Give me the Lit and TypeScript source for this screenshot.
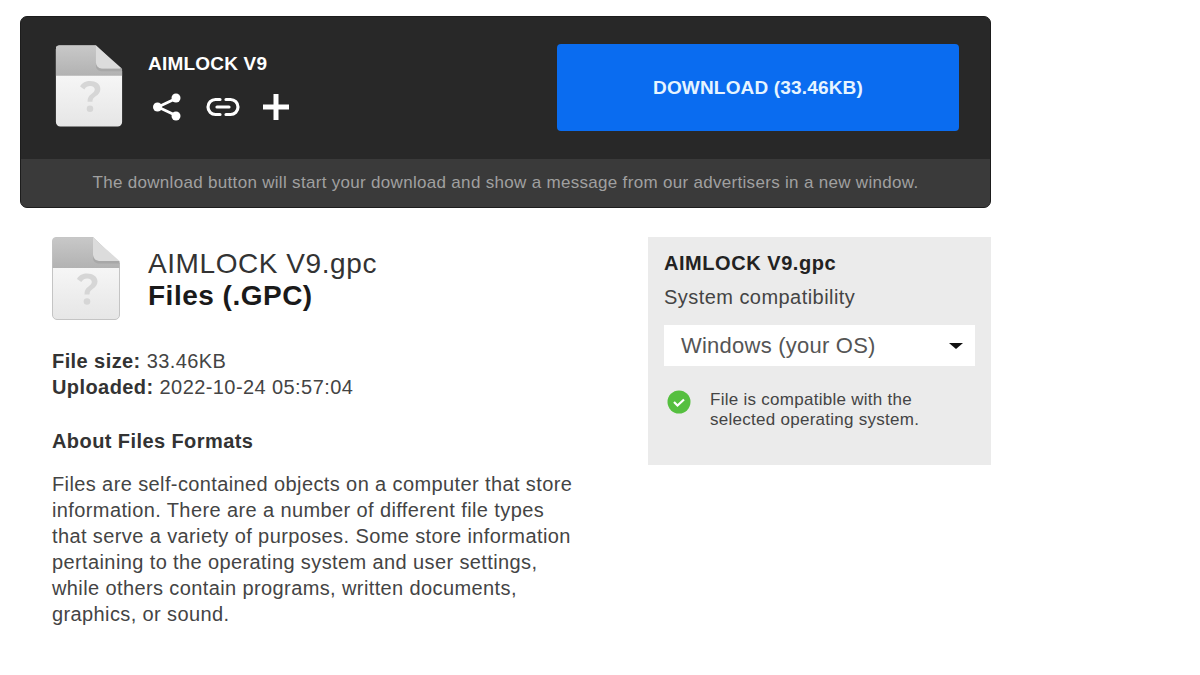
import { LitElement, html, css, svg } from "lit";
import { customElement } from "lit/decorators.js";

const fileIcon = (dark: boolean) => svg`
<svg class="fi" viewBox="0 0 68 83" width="68" height="83" aria-hidden="true">
  <defs>
    <linearGradient id="top" x1="0" y1="0" x2="0" y2="1"><stop offset="0" stop-color="#c8c8c8"/><stop offset="1" stop-color="#b2b2b2"/></linearGradient>
    <linearGradient id="bot" x1="0" y1="0" x2="0" y2="1"><stop offset="0" stop-color="#ffffff"/><stop offset="1" stop-color="#e6e6e6"/></linearGradient>
  </defs>
  <path d="M4 .5H41L67.5 26V78a4.500 4.500 0 0 1-4.500 4.500H5A4.500 4.500 0 0 1 .5 78V4A3.500 3.500 0 0 1 4 .5Z" fill="url(#bot)" stroke="${dark ? "none" : "#c4c4c4"}"/>
  <path d="M4 .5H41L67.5 26V31H.5V4A3.500 3.500 0 0 1 4 .5Z" fill="url(#top)"/>
  <path d="M41 .5L67.5 24H47a6 6 0 0 1-6-6Z" fill="#dcdcdc"/>
  <path d="M41 18a6 6 0 0 0 6 6H67.5V26.500H46a6 6 0 0 1-5-6Z" fill="#a8a8a8"/>
  <path d="M25 42c2-4 6-5.500 10-5.500 6 0 10.500 3 10.500 8 0 3.500-2 5.500-4.800 7.500-2.200 1.600-3.200 2.700-3.200 5.500h-5c0-4 1.200-6 4-8 2.300-1.700 3.300-2.800 3.300-4.700 0-2-1.800-3.300-4.500-3.300-2.500 0-4.500 1-6 3.500Z" fill="#d6d6d6"/>
  <circle cx="35" cy="64.500" r="3.300" fill="#d6d6d6"/>
</svg>`;

@customElement("app-root")
export class AppRoot extends LitElement {
  static styles = css`
    :host {
      display: block;
      width: 1200px;
      height: 675px;
      box-sizing: border-box;
      padding: 16px 209px 0 20px;
      background: #fff;
      font-family: "Liberation Sans", Arial, sans-serif;
      color: #333;
      overflow: hidden;
    }
    .card {
      height: 192px;
      background: #282828;
      border: 1px solid #1d1d1d;
      border-radius: 7px;
      box-sizing: border-box;
      display: flex;
      flex-direction: column;
      overflow: hidden;
    }
    .card-main {
      flex: 0 0 142px;
      display: flex;
      align-items: flex-start;
      padding: 27px 31px 0 34px;
      box-sizing: border-box;
    }
    .card-main .fi { flex: none; height: 82px; margin-top: 1px; }
    .card-info {
      margin-left: 25px;
      flex: 1;
      display: flex;
      flex-direction: column;
      padding-top: 10px;
    }
    .card-title {
      color: #fff;
      font-size: 19px;
      font-weight: 700;
      line-height: 20px;
      letter-spacing: 0.2px;
    }
    .actions {
      display: flex;
      align-items: center;
      gap: 23px;
      margin-top: 18px;
      margin-left: 4px;
    }
    .actions svg { display: block; flex: none; }
    .dl {
      width: 402px;
      height: 87px;
      background: #0a6cf0;
      border-radius: 4px;
      display: flex;
      align-items: center;
      justify-content: center;
      color: #e6f4ff;
      font-size: 19px;
      font-weight: 700;
      letter-spacing: 0.17px;
      flex: none;
    }
    .card-note {
      flex: 1;
      background: #3a3a3a;
      color: #a0a0a0;
      font-size: 17px;
      display: flex;
      align-items: center;
      justify-content: center;
      letter-spacing: 0.31px;
      white-space: nowrap;
    }
    .body {
      display: flex;
      justify-content: space-between;
      margin-top: 29px;
      padding-left: 32px;
    }
    .left { width: 560px; }
    .head { display: flex; gap: 28px; }
    .head h1 {
      margin: 11px 0 0;
      font-size: 28px;
      font-weight: 400;
      line-height: 31px;
      letter-spacing: 0.57px;
      color: #333;
    }
    .head h2 {
      margin: 1px 0 0;
      font-size: 28px;
      font-weight: 700;
      line-height: 31px;
      letter-spacing: 0.5px;
      color: #1a1a1a;
    }
    .meta {
      margin-top: 28px;
      font-size: 20px;
      line-height: 26px;
      letter-spacing: 0.42px;
      color: #444;
    }
    .meta b { color: #333; }
    h3 {
      margin: 29px 0 0;
      font-size: 20px;
      line-height: 24px;
      font-weight: 700;
      letter-spacing: 0.42px;
      color: #333;
    }
    .about {
      margin: 18px 0 0;
      font-size: 20px;
      line-height: 26px;
      letter-spacing: 0.39px;
      color: #444;
      white-space: nowrap;
    }
    .panel {
      width: 343px;
      height: 228px;
      box-sizing: border-box;
      background: #ebebeb;
      padding: 14px 16px 0;
      color: #333;
    }
    .panel-title { font-size: 20px; font-weight: 700; line-height: 24px; letter-spacing: 0.55px; color: #222; }
    .panel-sub { font-size: 20px; line-height: 24px; margin-top: 10px; letter-spacing: 0.45px; color: #444; }
    .select {
      margin-top: 16px;
      height: 41px;
      padding: 1px 12px 0 17px;
      box-sizing: border-box;
      background: #fff;
      display: flex;
      align-items: center;
      justify-content: space-between;
      font-size: 22px;
      letter-spacing: 0.23px;
      color: #555;
    }
    .caret {
      width: 0; height: 0;
      border-left: 7.5px solid transparent;
      border-right: 7.5px solid transparent;
      border-top: 6px solid #111;
    }
    .compat {
      display: flex;
      margin-top: 24px;
      padding-left: 3px;
      gap: 19px;
      font-size: 17px;
      line-height: 20px;
      letter-spacing: 0.27px;
      color: #444;
    }
    .compat svg { flex: none; }
  `;

  render() {
    return html`
      <section class="card">
        <div class="card-main">
          ${fileIcon(true)}
          <div class="card-info">
            <div class="card-title">AIMLOCK V9</div>
            <div class="actions">
              <svg width="30" height="30" viewBox="0 0 30 30" fill="#fff" aria-hidden="true">
                <path d="M24 6.500 6 15l18 8.500" fill="none" stroke="#fff" stroke-width="2.800"/>
                <circle cx="24" cy="6" r="4.500"/><circle cx="5.500" cy="15" r="4.500"/><circle cx="24" cy="24" r="4.500"/>
              </svg>
              <svg width="36" height="30" viewBox="0 0 36 30" fill="none" stroke="#fff" stroke-width="3.200" stroke-linecap="round" aria-hidden="true">
                <path d="M15 7.500H10.500a7.500 7.500 0 0 0 0 15H15"/><path d="M21 7.500h4.500a7.500 7.500 0 0 1 0 15H21"/><path d="M12 15H24"/>
              </svg>
              <svg width="28" height="28" viewBox="0 0 28 28" fill="#fff" aria-hidden="true" style="margin-left:-2px">
                <path d="M11.500 1h5v10.500H27v5H16.500V27h-5V16.500H1v-5h10.500Z"/>
              </svg>
            </div>
          </div>
          <div class="dl">DOWNLOAD (33.46KB)</div>
        </div>
        <div class="card-note">The download button will start your download and show a message from our advertisers in a new window.</div>
      </section>
      <div class="body">
        <div class="left">
          <div class="head">
            ${fileIcon(false)}
            <div>
              <h1>AIMLOCK V9.gpc</h1>
              <h2>Files (.GPC)</h2>
            </div>
          </div>
          <div class="meta">
            <div><b>File size:</b> 33.46KB</div>
            <div><b>Uploaded:</b> 2022-10-24 05:57:04</div>
          </div>
          <h3>About Files Formats</h3>
          <p class="about">Files are self-contained objects on a computer that store<br>information. There are a number of different file types<br>that serve a variety of purposes. Some store information<br>pertaining to the operating system and user settings,<br>while others contain programs, written documents,<br>graphics, or sound.</p>
        </div>
        <aside class="panel">
          <div class="panel-title">AIMLOCK V9.gpc</div>
          <div class="panel-sub">System compatibility</div>
          <div class="select"><span>Windows (your OS)</span><span class="caret"></span></div>
          <div class="compat">
            <svg width="24" height="24" viewBox="0 0 24 24" aria-hidden="true">
              <circle cx="12" cy="12" r="11.500" fill="#55bf3f"/>
              <path d="M7 12l3.500 3.500L17 9.500" fill="none" stroke="#fff" stroke-width="2.200"/>
            </svg>
            <div>File is compatible with the<br>selected operating system.</div>
          </div>
        </aside>
      </div>
    `;
  }
}
